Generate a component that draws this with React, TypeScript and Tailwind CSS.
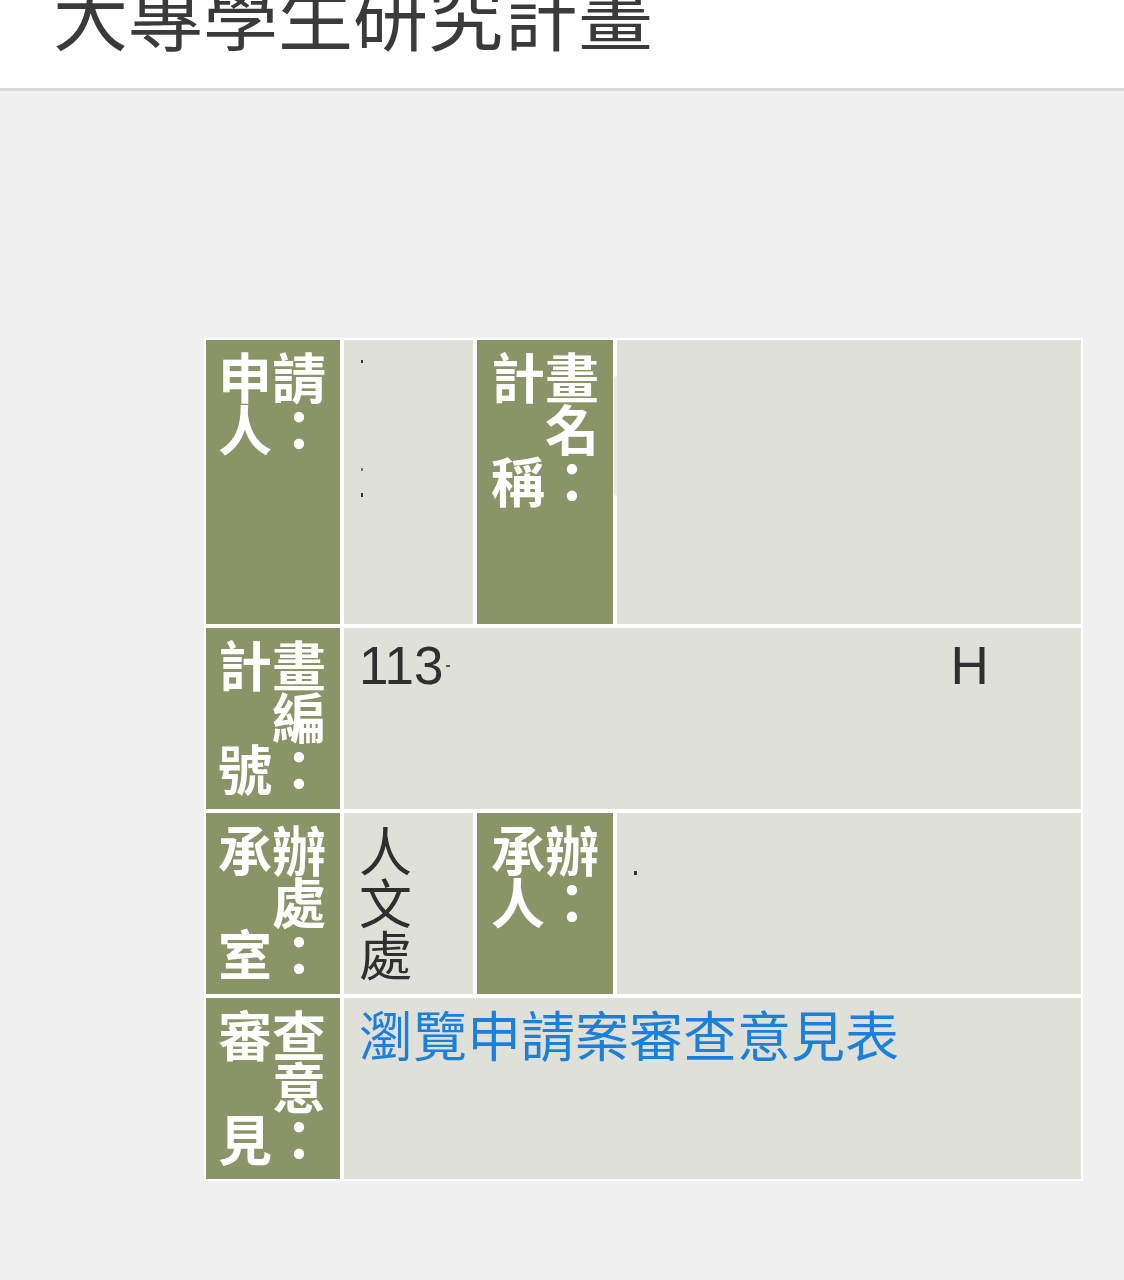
import React from "react";

const font = { fontFamily: '"Liberation Sans", "Noto Sans CJK TC", sans-serif' };

function Label({ children }: { children: React.ReactNode }) {
  return (
    <div className="bg-[#8b9467] text-white font-bold text-[54px] leading-[52px] text-right pl-[8px] pr-[14px] pt-[14px] overflow-hidden">
      {children}
    </div>
  );
}

function Dot({ className }: { className: string }) {
  return <span className={"block bg-[#333] " + className} />;
}

export default function App() {
  return (
    <div className="min-h-[1280px] bg-[#f0f0f0] overflow-hidden" style={font}>
      <header className="h-[91px] bg-white border-b-[3px] border-[#d8d8d8] overflow-hidden">
        <h1 className="pl-[53px] -mt-[18px] text-[75px] leading-[75px] font-normal text-[#3a3a3a] whitespace-nowrap">
          大專學生研究計畫
        </h1>
      </header>
      <div className="pt-[247px] pl-[204px] pr-[41px]">
        <div className="grid grid-cols-[134px_129px_136px_1fr] grid-rows-[284px_181px_181px_181px] gap-[4px] bg-white p-[2px]">
          <Label>申請人：</Label>
          <div className="bg-[#dfe0d8] pl-[17px] pt-[20px] flex flex-col">
            <Dot className="w-[2px] h-[3px]" />
            <span className="block h-[105px]" />
            <Dot className="w-[2px] h-[3px] opacity-60" />
            <span className="block h-[22px]" />
            <Dot className="w-[2px] h-[4px]" />
          </div>
          <Label>計畫名稱：</Label>
          <div className="bg-[#dfe0d8] flex items-start pt-[36px]">
            <span className="block w-[3px] h-[120px] -ml-[3px] bg-[#e4e5de] rounded-l-full opacity-80" />
          </div>

          <Label>計畫編號：</Label>
          <div className="col-span-3 bg-[#dfe0d8] pl-[15px] pt-[12px] text-[53px] leading-[52px] text-[#2f2f2f] flex">
            <span>113</span>
            <span className="block w-[4px] h-[2px] bg-[#555] mt-[25px] ml-[2px]" />
            <span className="ml-[501px]">H</span>
          </div>

          <Label>承辦處室：</Label>
          <div className="bg-[#dfe0d8] pl-[15px] pr-[15px] pt-[10px] text-[53px] leading-[52px] text-[#2f2f2f]" style={{ fontFamily: '"Noto Sans CJK TC", sans-serif' }}>
            人文處
          </div>
          <Label>承辦人：</Label>
          <div className="bg-[#dfe0d8] pl-[17px] pt-[58px]">
            <Dot className="w-[3px] h-[4px]" />
          </div>

          <Label>審查意見：</Label>
          <div className="col-span-3 bg-[#dfe0d8] pl-[15px] pt-[10px] text-[54px] leading-[52px]" style={{ fontFamily: '"Noto Sans CJK TC", sans-serif' }}>
            <a className="text-[#1b7fdd]" href="#">瀏覽申請案審查意見表</a>
          </div>
        </div>
      </div>
    </div>
  );
}
